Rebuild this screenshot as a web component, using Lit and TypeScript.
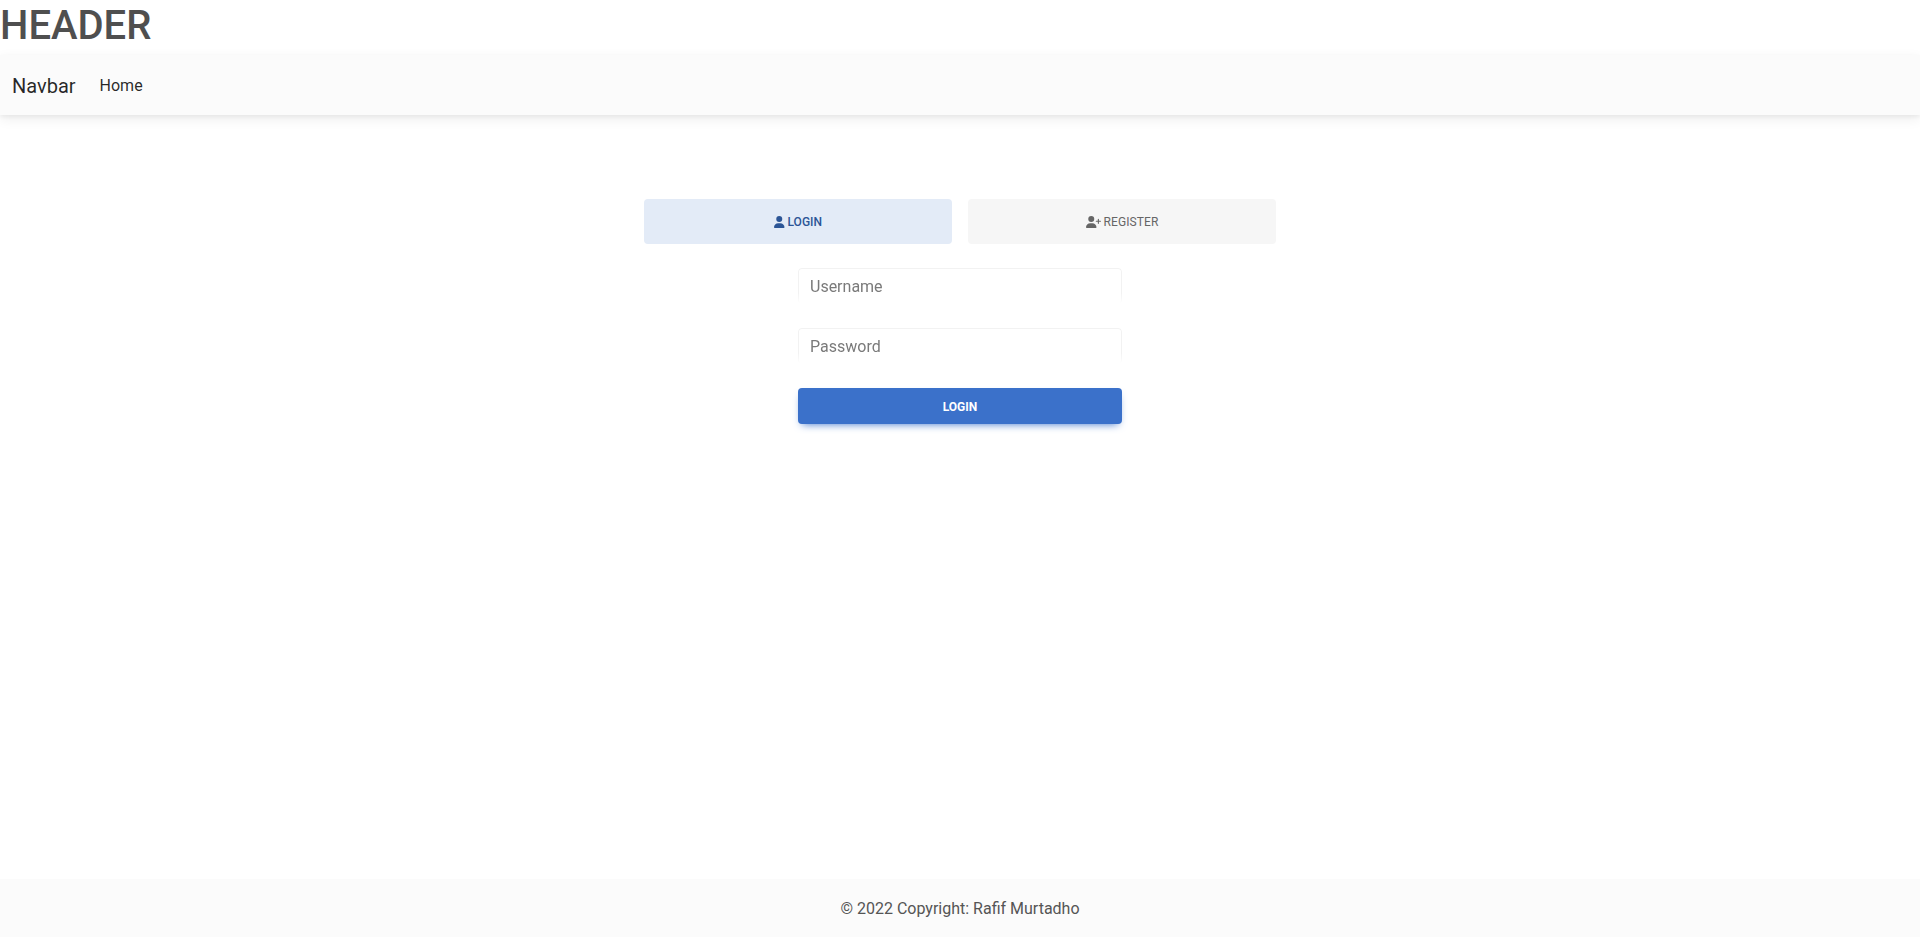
import { LitElement, html, css } from "lit";
import { customElement } from "lit/decorators.js";

const person = html`<svg class="ic" viewBox="0 0 448 512" aria-hidden="true"><path fill="currentColor" d="M224 256A128 128 0 1 0 224 0a128 128 0 1 0 0 256zm-45.700 48C79.800 304 0 383.800 0 482.300 0 498.700 13.300 512 29.700 512h388.600c16.400 0 29.700-13.300 29.700-29.700C448 383.800 368.200 304 269.700 304h-91.400z"/></svg>`;
const personPlus = html`<svg class="ic2" viewBox="0 0 640 512" aria-hidden="true"><path fill="currentColor" d="M96 128a128 128 0 1 1 256 0 128 128 0 1 1-256 0zM0 482.300C0 383.800 79.800 304 178.300 304h91.400C368.200 304 448 383.800 448 482.300c0 16.400-13.300 29.700-29.700 29.700H29.700C13.300 512 0 498.700 0 482.300zM504 312v-64h-64c-13.300 0-24-10.700-24-24s10.700-24 24-24h64v-64c0-13.300 10.700-24 24-24s24 10.700 24 24v64h64c13.300 0 24 10.700 24 24s-10.700 24-24 24h-64v64c0 13.300-10.700 24-24 24s-24-10.700-24-24z"/></svg>`;

@customElement("app-root")
export class AppRoot extends LitElement {
  static styles = css`
    :host {
      display: flex;
      flex-direction: column;
      min-height: 937px;
      font-family: Roboto, "Liberation Sans", sans-serif;
      color: #4f4f4f;
      background: #fff;
      font-size: 16px;
    }
    header {
      padding-top: 2px;
    }
    h1 {
      margin: 0 0 5px;
      font-size: 40px;
      font-weight: 500;
      line-height: 48px;
      color: #4f4f4f;
    }
    .navbar {
      display: flex;
      align-items: center;
      box-sizing: border-box;
      height: 60px;
      padding: 2px 12px 0;
      background: #fbfbfb;
      box-shadow: 0 4px 12px 0 rgba(0, 0, 0, 0.07), 0 2px 4px rgba(0, 0, 0, 0.05);
    }
    .brand {
      font-size: 20px;
      line-height: 30px;
      color: rgba(0, 0, 0, 0.85);
      margin-right: 16px;
      text-decoration: none;
    }
    .nav-link {
      padding: 0 8px;
      line-height: 24px;
      color: rgba(0, 0, 0, 0.85);
      text-decoration: none;
    }
    main {
      flex: 1;
      display: flex;
      flex-direction: column;
      align-items: center;
      padding-top: 84px;
    }
    .tabs {
      width: 632px;
      display: grid;
      grid-template-columns: 1fr 1fr;
      gap: 16px;
      margin-bottom: 24px;
    }
    .tab {
      display: flex;
      align-items: center;
      justify-content: center;
      gap: 3px;
      height: 45px;
      border-radius: 4px;
      background: #f6f6f6;
      color: #666;
      font-size: 12px;
      font-weight: 400;
      letter-spacing: 0.1px;
      text-transform: uppercase;
      text-decoration: none;
    }
    .tab.active {
      background: #e3ebf7;
      color: #2c5596;
      font-weight: 500;
      letter-spacing: 0;
    }
    .ic { width: 10.500px; height: 12px; }
    .ic2 { width: 15px; height: 12px; }
    form {
      width: 324px;
      display: flex;
      flex-direction: column;
      gap: 24px;
      margin: 0;
    }
    .field {
      display: block;
      height: 36px;
      border-radius: 4px;
      padding: 0 11px;
      border: 1px solid #f2f2f2;
      border-bottom-color: transparent;
      box-sizing: border-box;
      background: #fff;
      -webkit-mask-image: linear-gradient(to bottom, #000 70%, transparent 100%);
      mask-image: linear-gradient(to bottom, #000 70%, transparent 100%);
    }
    input {
      display: block;
      box-sizing: border-box;
      width: 100%;
      height: 34px;
      border: 0;
      padding: 1px 0 0;
      margin: 0;
      outline: 0;
      background: transparent;
      font: 400 16px/33px Roboto, "Liberation Sans", sans-serif;
      color: #4f4f4f;
    }
    input::placeholder {
      color: #7a7a7a;
      opacity: 1;
    }
    button {
      height: 36px;
      border: 0;
      border-radius: 4px;
      padding: 1px 0 0;
      background: #3b71ca;
      color: #fff;
      font: 700 12px/14px Roboto, "Liberation Sans", sans-serif;
      text-transform: uppercase;
      box-shadow: 0 4px 9px -4px #3b71ca;
    }
    footer {
      height: 58px;
      display: flex;
      align-items: center;
      justify-content: center;
      background: #fbfbfb;
      color: #555;
      font-size: 16px;
    }
  `;

  render() {
    return html`
      <header><h1>HEADER</h1></header>
      <nav class="navbar">
        <a class="brand" href="#">Navbar</a>
        <a class="nav-link" href="#">Home</a>
      </nav>
      <main>
        <div class="tabs">
          <a class="tab active" href="#">${person}<span>Login</span></a>
          <a class="tab" href="#">${personPlus}<span>Register</span></a>
        </div>
        <form @submit=${(e: Event) => e.preventDefault()}>
          <label class="field"><input type="text" placeholder="Username" /></label>
          <label class="field"><input type="password" placeholder="Password" /></label>
          <button type="submit">Login</button>
        </form>
      </main>
      <footer>© 2022 Copyright: Rafif Murtadho</footer>
    `;
  }
}
